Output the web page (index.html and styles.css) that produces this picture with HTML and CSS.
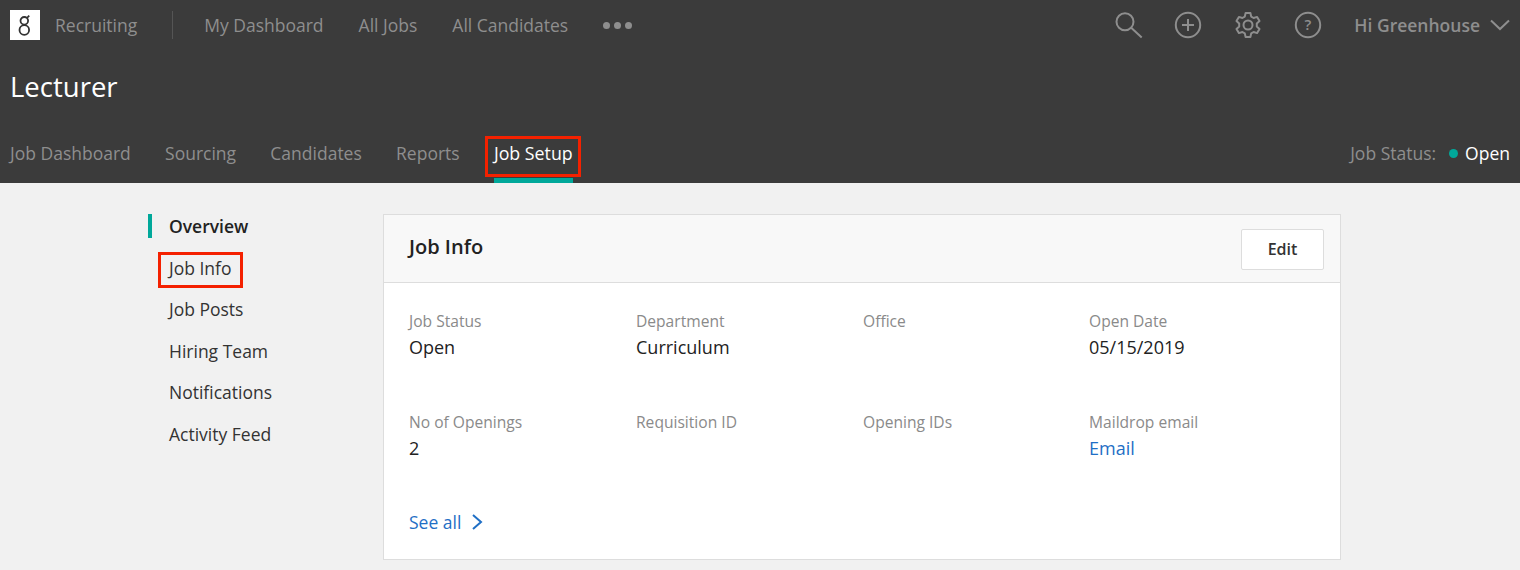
FILE: index.html
```html
<!DOCTYPE html>
<html lang="en">

<head>
    <meta charset="UTF-8">
    <meta name="viewport" content="width=device-width, initial-scale=1.0">
    <title>Lecturer - Job Setup</title>
    <link rel="stylesheet" href="styles.css">
</head>

<body>
    <header class="header">
        <div class="topbar">
            <div class="logo">
                <svg width="30" height="30" viewBox="0 0 30 30">
                    <circle cx="14.3" cy="10.8" r="3.8"></circle>
                    <circle cx="14.3" cy="20" r="4.8"></circle>
                    <path d="M17 8 L19.2 5.6"></path>
                </svg>
            </div>
            <a class="product">Recruiting</a>
            <span class="divider"></span>
            <nav class="main-nav">
                <a>My Dashboard</a>
                <a>All Jobs</a>
                <a>All Candidates</a>
                <span class="dots"><i></i><i></i><i></i></span>
            </nav>
            <div class="tools">
                <svg class="icon" width="30" height="30" viewBox="0 0 30 30">
                    <circle cx="12" cy="11.7" r="8.5"></circle>
                    <path d="M18.2 17.8 L28.7 27.5"></path>
                </svg>
                <svg class="icon" width="30" height="30" viewBox="0 0 30 30">
                    <circle cx="15" cy="15" r="12.2"></circle>
                    <path d="M15 9 V21 M9 15 H21"></path>
                </svg>
                <svg class="icon" width="30" height="30" viewBox="0 0 30 30">
                    <path d="M12.6 3 H17.4 L18.2 6.6 L20.6 8 L24.1 6.9 L26.5 11.1 L23.8 13.6 V16.4 L26.5 18.9 L24.1 23.1 L20.6 22 L18.2 23.4 L17.4 27 H12.6 L11.8 23.4 L9.4 22 L5.9 23.1 L3.5 18.9 L6.2 16.4 V13.6 L3.5 11.1 L5.9 6.9 L9.4 8 L11.8 6.6 Z" stroke-linejoin="round"></path>
                    <circle cx="15" cy="15" r="4.5"></circle>
                </svg>
                <svg class="icon" width="30" height="30" viewBox="0 0 30 30">
                    <circle cx="15" cy="15" r="12.2"></circle>
                    <text x="15" y="20" class="icon-text">?</text>
                </svg>
                <a class="user">Hi Greenhouse</a>
                <svg class="chevron" width="20" height="12" viewBox="0 0 20 12">
                    <path d="M1 1.5 L10 10 L19 1.5"></path>
                </svg>
            </div>
        </div>

        <h1 class="job-title">Lecturer</h1>

        <div class="tabs">
            <a class="tab">Job Dashboard</a>
            <a class="tab">Sourcing</a>
            <a class="tab">Candidates</a>
            <a class="tab">Reports</a>
            <a class="tab active"><span class="marked">Job Setup</span></a>
            <div class="job-status">
                <span>Job Status:</span>
                <i class="status-dot"></i>
                <b>Open</b>
            </div>
        </div>
    </header>

    <main class="content">
        <ul class="side-nav">
            <li class="current">Overview</li>
            <li><span class="marked">Job Info</span></li>
            <li>Job Posts</li>
            <li>Hiring Team</li>
            <li>Notifications</li>
            <li>Activity Feed</li>
        </ul>

        <section class="card">
            <div class="card-head">
                <h2>Job Info</h2>
                <button class="edit">Edit</button>
            </div>
            <div class="card-body">
                <div class="fields">
                    <div class="field"><label>Job Status</label><p>Open</p></div>
                    <div class="field"><label>Department</label><p>Curriculum</p></div>
                    <div class="field"><label>Office</label></div>
                    <div class="field"><label>Open Date</label><p>05/15/2019</p></div>
                    <div class="field"><label>No of Openings</label><p>2</p></div>
                    <div class="field"><label>Requisition ID</label></div>
                    <div class="field"><label>Opening IDs</label></div>
                    <div class="field"><label>Maildrop email</label><p><a>Email</a></p></div>
                </div>
                <a class="see-all">See all
                    <svg width="12" height="16" viewBox="0 0 12 16"><path d="M2 1 L10 8 L2 15"></path></svg>
                </a>
            </div>
        </section>
    </main>
</body>

</html>
```

FILE: styles.css
```css
* {
    margin: 0;
    padding: 0;
    box-sizing: border-box;
}

body {
    font-family: "Open Sans", sans-serif;
    background: #f1f1f1;
    color: #222;
    height: 570px;
    overflow: hidden;
}

/* Header */
.header {
    background: #3b3b3b;
    height: 183px;
    padding: 0 10px;
}

.topbar {
    display: flex;
    align-items: center;
    height: 50px;
    color: #8e8e8e;
    font-size: 17.5px;
}

.logo {
    width: 30px;
    height: 30px;
    background: #fff;
}

.logo svg {
    display: block;
    fill: none;
    stroke: #333;
    stroke-width: 1.8;
}

.product {
    margin-left: 15px;
}

.divider {
    width: 1px;
    height: 28px;
    background: #555;
    margin: 0 31px 0 35px;
}

.main-nav {
    display: flex;
    align-items: center;
    gap: 35px;
}

.dots {
    display: flex;
    gap: 4px;
}

.dots i {
    width: 7px;
    height: 7px;
    border-radius: 50%;
    background: #8e8e8e;
}

.tools {
    margin-left: auto;
    display: flex;
    align-items: center;
    gap: 30px;
}

.icon {
    fill: none;
    stroke: #8e8e8e;
    stroke-width: 2;
}

.icon-text {
    fill: #8e8e8e;
    stroke: none;
    font-size: 15px;
    font-weight: 600;
    text-anchor: middle;
}

.user {
    font-weight: 600;
    margin-left: 1px;
}

.chevron {
    fill: none;
    stroke: #8e8e8e;
    stroke-width: 2;
    margin-left: -20px;
}

.job-title {
    color: #fff;
    font-size: 27.5px;
    font-weight: 400;
    line-height: 36px;
    margin-top: 19px;
}

.tabs {
    display: flex;
    align-items: stretch;
    gap: 34.25px;
    margin-top: 29px;
    height: 49px;
    font-size: 17.5px;
    color: #8e8e8e;
}

.tab {
    padding-top: 7px;
    position: relative;
}

.tab.active {
    color: #fff;
    font-size: 17.8px;
    border-bottom: 5px solid #00a89a;
}

.marked {
    position: relative;
    display: inline-block;
}

.marked::before {
    content: "";
    position: absolute;
    border: 3px solid #f42100;
}

.tab .marked::before {
    inset: -5px -8px -12px -9px;
}

.job-status {
    margin-left: auto;
    display: flex;
    align-items: flex-start;
    padding-top: 7px;
}

.job-status b {
    color: #fff;
    font-weight: 400;
}

.status-dot {
    width: 9px;
    height: 9px;
    border-radius: 50%;
    background: #00a89a;
    margin: 8px 7px 0 13px;
}

/* Page content */
.content {
    display: flex;
    align-items: flex-start;
    padding: 31px 0 0 148px;
}

.side-nav {
    list-style: none;
    width: 235px;
    font-size: 17.5px;
    color: #333;
}

.side-nav li {
    height: 41.6px;
    line-height: 25px;
    padding-left: 21px;
}

.side-nav .current {
    font-weight: 600;
    color: #222;
    border-left: 4px solid #00a89a;
    padding-left: 17px;
    height: 24px;
    margin-bottom: 17.6px;
}

.side-nav .marked::before {
    inset: -4px -11px -7px -11px;
}

/* Card */
.card {
    width: 958px;
    height: 346px;
    background: #fff;
    border: 1px solid #ddd;
}

.card-head {
    height: 68px;
    background: #f8f8f8;
    border-bottom: 1px solid #ddd;
    display: flex;
    justify-content: space-between;
    align-items: center;
    padding: 0 16px 0 25px;
}

.card-head h2 {
    font-size: 20px;
    font-weight: 600;
    color: #222;
    padding-bottom: 4px;
}

.edit {
    width: 83px;
    height: 41px;
    margin-top: 2px;
    padding-bottom: 2px;
    background: #fff;
    border: 1px solid #ddd;
    border-radius: 2px;
    font-family: inherit;
    font-size: 16px;
    font-weight: 600;
    color: #333;
}

.card-body {
    padding: 26px 25px 0;
}

.fields {
    display: grid;
    grid-template-columns: 227px 227px 226px 1fr;
    grid-auto-rows: 101px;
}

.field label {
    display: block;
    font-size: 15.6px;
    line-height: 24px;
    color: #8a8a8a;
}

.field p {
    font-size: 18px;
    line-height: 28px;
    color: #222;
}

.field a,
.see-all {
    color: #1f6fc5;
}

.see-all {
    display: inline-flex;
    align-items: center;
    gap: 10px;
    font-size: 17.5px;
    line-height: 24px;
    margin-top: -1px;
}

.see-all svg {
    fill: none;
    stroke: #1f6fc5;
    stroke-width: 2;
}
```
